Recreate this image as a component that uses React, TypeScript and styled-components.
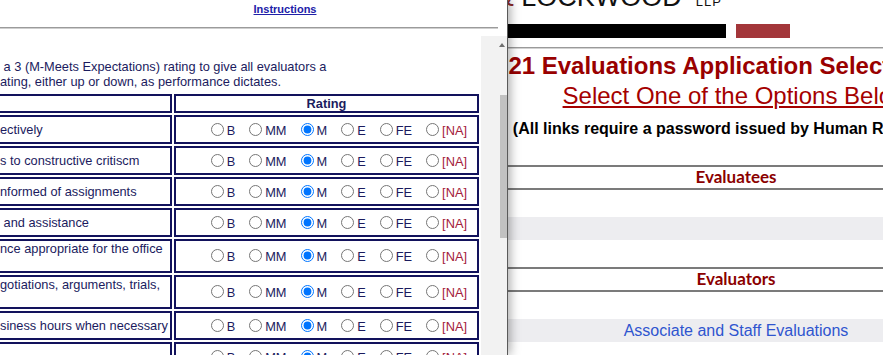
import React from "react";
import styled, { createGlobalStyle } from "styled-components";

const GlobalStyle = createGlobalStyle`
  html, body {
    margin: 0;
    padding: 0;
  }
  body {
    background: #fff;
    font-family: "Liberation Sans", Arial, sans-serif;
  }
`;

const Screen = styled.div`
  position: relative;
  width: 883px;
  height: 355px;
  overflow: hidden;
`;

/* ---------- background page (scrolled) ---------- */

const Page = styled.div`
  width: 1472px;
  margin-top: -19px;
  text-align: center;
`;

const Banner = styled.div`
  width: 790px;
`;

const Logo = styled.div`
  width: 722px;
  height: 32px;
  line-height: 32px;
  text-align: right;
  font-size: 27px;
  color: #111;
  white-space: nowrap;
`;

const Amp = styled.span`
  color: #8c2a2a;
`;

const LLP = styled.span`
  margin-left: 14px;
  font-size: 13px;
  letter-spacing: 1px;
`;

const Bars = styled.div`
  display: flex;
  gap: 10px;
  height: 14px;
  margin-top: 11px;
`;

const Bar = styled.div<{ $color: string; $width?: number }>`
  background: ${(p) => p.$color};
  ${(p) => (p.$width ? `width: ${p.$width}px;` : "flex: 1;")}
`;

const PageRule = styled.div`
  margin-top: 9px;
  border-top: 1px solid #9a9a9a;
  border-bottom: 1px solid #d2d2d2;
`;

const Title = styled.h1`
  margin: 3px 0 0;
  font-size: 24px;
  line-height: 28px;
  font-weight: 700;
  color: #990000;
  white-space: nowrap;
`;

const Subtitle = styled.a`
  display: block;
  margin-top: 2px;
  font-size: 24px;
  line-height: 27px;
  color: #a50000;
  text-decoration: underline;
  white-space: nowrap;
`;

const Note = styled.div`
  margin-top: 11px;
  font-size: 16px;
  line-height: 18px;
  font-weight: 700;
  color: #000;
  white-space: nowrap;
`;

const Sections = styled.div`
  margin-top: 27px;
`;

const SectionHead = styled.div`
  height: 21px;
  line-height: 20px;
  border-top: 2px solid #7b7b7b;
  border-bottom: 2px solid #7b7b7b;
  font-family: Lato, "Open Sans", sans-serif;
  font-size: 17px;
  font-weight: 700;
  color: #8b0000;
`;

const MenuRow = styled.div<{ $alt?: boolean }>`
  height: ${(p) => (p.$alt ? 23 : 27)}px;
  line-height: 23px;
  background: ${(p) => (p.$alt ? "#ededf0" : "#fff")};
`;

const MenuLink = styled.a`
  font-size: 16px;
  color: #2f55cf;
  text-decoration: none;
`;

/* ---------- popup window ---------- */

const Popup = styled.div`
  position: absolute;
  left: 0;
  top: 0;
  width: 507px;
  height: 355px;
  display: flex;
  flex-direction: column;
  background: #fff;
  border-right: 1px solid #5a5a5a;
  box-shadow: 2px 0 10px rgba(0, 0, 0, 0.35);
  overflow: hidden;
`;

const PopupHeader = styled.div`
  flex-shrink: 0;
  height: 36px;
`;

const LinkRow = styled.div`
  padding: 1px 0 0 72px;
  width: 426px;
  text-align: center;
  line-height: 13px;
`;

const Instructions = styled.a`
  font-size: 11px;
  font-weight: 700;
  color: #2020a8;
  text-decoration: underline;
`;

const HeaderRule = styled.div`
  margin: 11px 9px 0 0;
  border-top: 1px solid #9b9b9b;
  border-bottom: 1px solid #cfcfcf;
`;

const PopupBody = styled.div`
  flex: 1;
  display: flex;
  min-height: 0;
`;

const Sheet = styled.div`
  flex: 1;
  min-width: 0;
  overflow: hidden;
  color: #1b1b5e;
  font-size: 12.8px;
`;

const Intro = styled.p`
  margin: 23px 0 0;
  line-height: 15px;
  white-space: nowrap;
`;

const RatingTable = styled.table`
  margin: 3px 0 0 -6px;
  width: 487px;
  table-layout: fixed;
  border-collapse: separate;
  border-spacing: 2px;
  font-size: 12.8px;
  color: #1b1b5e;
`;

const HeadCell = styled.th<{ $w?: number }>`
  ${(p) => (p.$w ? `width: ${p.$w}px;` : "")}
  height: 15px;
  padding: 0 2px;
  border: 2px solid #12125c;
  font-weight: 700;
  line-height: 15px;
  text-align: center;
`;

const CritCell = styled.td<{ $tall?: boolean }>`
  height: ${(p) => (p.$tall ? 29 : 25)}px;
  padding: ${(p) => (p.$tall ? "1px" : "0")} 2px 0;
  border: 2px solid #12125c;
  line-height: 14px;
  vertical-align: ${(p) => (p.$tall ? "top" : "middle")};
  white-space: nowrap;
  overflow: hidden;
`;

const RateCell = styled.td`
  padding: 0 10px 0 2px;
  border: 2px solid #12125c;
  text-align: right;
  vertical-align: middle;
  white-space: nowrap;
`;

const Options = styled.div`
  display: inline-flex;
  align-items: center;
  gap: 14px;
`;

const Option = styled.label`
  display: inline-flex;
  align-items: center;
  gap: 3px;
`;

const Radio = styled.input.attrs({ type: "radio" })`
  margin: 0;
  width: 13px;
  height: 13px;
`;

const OptText = styled.span<{ $na?: boolean }>`
  color: ${(p) => (p.$na ? "#a3203a" : "inherit")};
  line-height: 15px;
  padding-top: 2px;
`;

const Track = styled.div`
  position: relative;
  flex-shrink: 0;
  width: 26px;
  background: #f2f2f2;
`;

const Thumb = styled.div`
  position: absolute;
  right: 0;
  top: 59px;
  width: 7px;
  height: 143px;
  background: #c1c1c1;
`;

const Arrow = styled.div`
  position: absolute;
  right: 2px;
  top: 7px;
  width: 0;
  height: 0;
  border-left: 3px solid transparent;
  border-right: 3px solid transparent;
  border-bottom: 4px solid #6f6f6f;
`;

const options = ["B", "MM", "M", "E", "FE", "[NA]"];

const criteria: { text: string; tall?: boolean }[] = [
  { text: "ectively" },
  { text: "s to constructive critiscm" },
  { text: "nformed of assignments" },
  { text: "\u00a0and assistance" },
  { text: "nce appropriate for the office", tall: true },
  { text: "gotiations, arguments, trials,", tall: true },
  { text: "siness hours when necessary" },
  { text: "" },
];

const sections = [
  { title: "Evaluatees", link: "" },
  { title: "Evaluators", link: "Associate and Staff Evaluations" },
];

export default function App() {
  return (
    <Screen>
      <GlobalStyle />
      <Page>
        <Banner>
          <Logo>
            <Amp>&amp;</Amp> LOCKWOOD<LLP>LLP</LLP>
          </Logo>
          <Bars>
            <Bar $color="#000" />
            <Bar $color="#a3363a" $width={54} />
          </Bars>
        </Banner>
        <PageRule />
        <Title>2021 Evaluations Application Selection Page</Title>
        <Subtitle>Select One of the Options Below</Subtitle>
        <Note>(All links require a password issued by Human Resources)</Note>
        <Sections>
          {sections.map((s) => (
            <div key={s.title}>
              <SectionHead>{s.title}</SectionHead>
              <MenuRow />
              <MenuRow $alt>{s.link && <MenuLink>{s.link}</MenuLink>}</MenuRow>
              <MenuRow />
            </div>
          ))}
        </Sections>
      </Page>

      <Popup>
        <PopupHeader>
          <LinkRow>
            <Instructions>Instructions</Instructions>
          </LinkRow>
          <HeaderRule />
        </PopupHeader>
        <PopupBody>
          <Sheet>
            <Intro>
              {"\u00a0a 3 (M-Meets Expectations) rating to give all evaluators a"}
              <br />
              ating, either up or down, as performance dictates.
            </Intro>
            <RatingTable>
              <thead>
                <tr>
                  <HeadCell $w={168} />
                  <HeadCell>Rating</HeadCell>
                </tr>
              </thead>
              <tbody>
                {criteria.map((c, i) => (
                  <tr key={i}>
                    <CritCell $tall={c.tall}>{c.text}</CritCell>
                    <RateCell>
                      <Options>
                        {options.map((o) => (
                          <Option key={o}>
                            <Radio name={`rate${i}`} defaultChecked={o === "M"} />
                            <OptText $na={o === "[NA]"}>{o}</OptText>
                          </Option>
                        ))}
                      </Options>
                    </RateCell>
                  </tr>
                ))}
              </tbody>
            </RatingTable>
          </Sheet>
          <Track>
            <Arrow />
            <Thumb />
          </Track>
        </PopupBody>
      </Popup>
    </Screen>
  );
}
